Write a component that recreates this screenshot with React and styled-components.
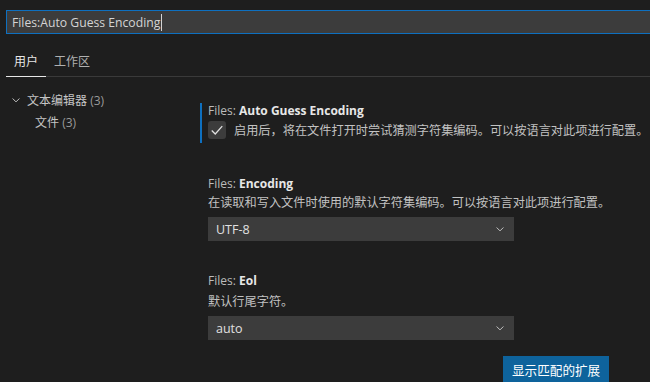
import React from 'react'
import styled, { createGlobalStyle } from 'styled-components'

const GlobalStyle = createGlobalStyle`
  html, body {
    margin: 0;
    padding: 0;
    background: #1e1e1e;
    overflow: hidden;
  }
  body {
    font-family: "Open Sans", "Noto Sans CJK SC", sans-serif;
    font-size: 13px;
    color: #cccccc;
  }
`

const Page = styled.div`
  width: 650px;
  height: 382px;
  padding-top: 10px;
  box-sizing: border-box;
  overflow: hidden;
`
const SearchBar = styled.div`
  margin-left: 6px;
  height: 24px;
  box-sizing: border-box;
  width: 660px;
  border: 1px solid #0e70c0;
  background: #3c3c3c;
  display: flex;
  align-items: center;
  padding-left: 5px;
  font-size: 12.2px;
  color: #d4d4d4;
`
const Caret = styled.span`
  display: inline-block;
  width: 1px;
  height: 17px;
  background: #d4d4d4;
  margin-left: 1px;
`
const TabRow = styled.div`
  margin: 12px 0 0 6px;
  display: flex;
  border-bottom: 1px solid #3a3a3a;
  height: 30px;
`
const Tab = styled.div`
  padding: 0 8px;
  display: flex;
  align-items: center;
  font-size: 12px;
  color: ${p => (p.active ? '#e7e7e7' : '#b0b0b0')};
  border-bottom: 1px solid ${p => (p.active ? '#e7e7e7' : 'transparent')};
  margin-bottom: -1px;
`
const Body = styled.div`
  display: grid;
  grid-template-columns: 200px 1fr;
`
const Tree = styled.div`
  padding-top: 12px;
`
const TreeRow = styled.div`
  height: 22px;
  display: flex;
  align-items: center;
  padding-left: ${p => p.indent}px;
  gap: 5px;
  font-size: 12px;
  color: #c5c5c5;
`
const Count = styled.span`
  color: #9a9a9a;
`
const Settings = styled.div`
  padding-top: 26px;
  display: flex;
  flex-direction: column;
`
const Setting = styled.div`
  padding-left: 6px;
  border-left: 2px solid ${p => (p.focused ? '#0e70c0' : 'transparent')};
  margin-top: ${p => p.gap || 0}px;
  display: flex;
  flex-direction: column;
  padding-bottom: ${p => (p.focused ? 4 : 0)}px;
`
const Title = styled.div`
  font-size: 12px;
  line-height: 16px;
  color: #bbbbbb;
  white-space: nowrap;
  b {
    color: #e7e7e7;
    font-weight: 700;
  }
`
const Desc = styled.div`
  font-size: 12.2px;
  line-height: 18px;
  margin-top: ${p => p.gap}px;
  white-space: nowrap;
  color: #c2c2c2;
`
const CheckRow = styled.label`
  display: flex;
  align-items: center;
  gap: 8px;
  margin-top: 2px;
  white-space: nowrap;
  font-size: 12.2px;
  color: #c2c2c2;
`
const Box = styled.span`
  flex: none;
  width: 18px;
  height: 18px;
  border-radius: 3px;
  background: #3c3c3c;
  display: flex;
  align-items: center;
  justify-content: center;
`
const Select = styled.div`
  width: 306px;
  height: 24px;
  margin-top: 5px;
  background: #3c3c3c;
  display: flex;
  align-items: center;
  justify-content: space-between;
  padding: 0 8px;
  box-sizing: border-box;
  font-size: 12.5px;
  color: #e0e0e0;
`
const Button = styled.div`
  align-self: flex-start;
  margin: 16px 0 0 303px;
  background: #0e639c;
  color: #ffffff;
  font-size: 12.6px;
  height: 26px;
  padding: 0 9px;
  display: flex;
  align-items: center;
`

const Chevron = ({ size = 12, color = '#c5c5c5' }) => (
  <svg width={size} height={size} viewBox="0 0 16 16" fill="none">
    <path d="M3.5 6l4.5 4.5L12.5 6" stroke={color} strokeWidth="1.3" />
  </svg>
)

const Check = () => (
  <svg width="14" height="14" viewBox="0 0 16 16" fill="none">
    <path d="M2 8.5l4 4L14 3.5" stroke="#e0e0e0" strokeWidth="1.5" />
  </svg>
)

export default function App () {
  return (
    <Page>
      <GlobalStyle />
      <SearchBar>
        Files:Auto Guess Encoding<Caret />
      </SearchBar>
      <TabRow>
        <Tab active>用户</Tab>
        <Tab>工作区</Tab>
      </TabRow>
      <Body>
        <Tree>
          <TreeRow indent={10}>
            <Chevron />
            <span>文本编辑器 <Count>(3)</Count></span>
          </TreeRow>
          <TreeRow indent={35}>
            <span>文件 <Count>(3)</Count></span>
          </TreeRow>
        </Tree>
        <Settings>
          <Setting focused>
            <Title>Files: <b>Auto Guess Encoding</b></Title>
            <CheckRow>
              <Box><Check /></Box>
              启用后，将在文件打开时尝试猜测字符集编码。可以按语言对此项进行配置。
            </CheckRow>
          </Setting>
          <Setting gap={33}>
            <Title>Files: <b>Encoding</b></Title>
            <Desc gap={2}>在读取和写入文件时使用的默认字符集编码。可以按语言对此项进行配置。</Desc>
            <Select>UTF-8<Chevron /></Select>
          </Setting>
          <Setting gap={32}>
            <Title>Files: <b>Eol</b></Title>
            <Desc gap={4}>默认行尾字符。</Desc>
            <Select>auto<Chevron /></Select>
          </Setting>
          <Button>显示匹配的扩展</Button>
        </Settings>
      </Body>
    </Page>
  )
}
